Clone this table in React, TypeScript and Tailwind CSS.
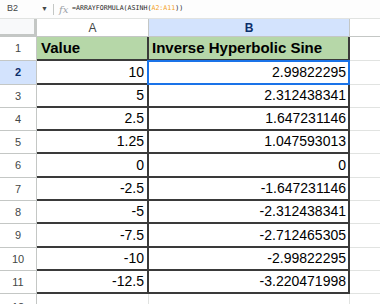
import React from 'react'

const rows = [
    { n: 2, a: '10', b: '2.99822295', h: 'h-[24px]' },
    { n: 3, a: '5', b: '2.312438341', h: 'h-[23px]' },
    { n: 4, a: '2.5', b: '1.647231146', h: 'h-[23px]' },
    { n: 5, a: '1.25', b: '1.047593013', h: 'h-[23px]' },
    { n: 6, a: '0', b: '0', h: 'h-[24px]' },
    { n: 7, a: '-2.5', b: '-1.647231146', h: 'h-[23px]' },
    { n: 8, a: '-5', b: '-2.312438341', h: 'h-[23px]' },
    { n: 9, a: '-7.5', b: '-2.712465305', h: 'h-[24px]' },
    { n: 10, a: '-10', b: '-2.99822295', h: 'h-[23px]' },
    { n: 11, a: '-12.5', b: '-3.220471998', h: 'h-[23px]' },
]

function App() {
    return (
        <div className="w-[380px] h-[304px] overflow-hidden bg-white font-['Liberation_Sans',Arial,sans-serif] text-black select-none">
            {/* formula bar */}
            <div className="h-[19px] flex items-center border-b border-[#e1e3e1] bg-[#fdfdfd] text-[#444746]">
                <span className="w-[41px] pl-[7px] text-[9px]">B2</span>
                <span className="text-[7px] w-[12px]">▼</span>
                <span className="w-px h-[11px] bg-[#c4c7c5] mr-[5px]"></span>
                <span className="italic text-[10px] font-['DejaVu_Serif',serif] text-[#9aa0a6] w-[13px]">fx</span>
                <span className="text-[6.6px] font-['DejaVu_Sans_Mono',monospace] text-[#1f1f1f]">
                    =ARRAYFORMULA(ASINH(<span className="text-[#f4a11d]">A2:A11</span>))
                </span>
            </div>

            {/* column headers */}
            <div className="flex h-[18px]">
                <div className="w-[37px] bg-[#f8f9fa] border-r-[3px] border-b-[3px] border-[#c4c7c5]"></div>
                <div className="w-[112px] flex items-center justify-center border-r border-b border-[#c4c7c5] text-[12px] text-[#444746]">A</div>
                <div className="w-[201px] flex items-center justify-center bg-[#d3e3fd] border-r border-b border-[#c4c7c5] text-[12px] font-bold text-[#0b2e6b]">B</div>
                <div className="flex-1 border-b border-[#c4c7c5]"></div>
            </div>

            {/* row 1 */}
            <div className="flex h-[24px]">
                <div className="w-[37px] flex items-center justify-center border-r border-b border-[#c4c7c5] text-[11px] text-[#444746]">1</div>
                <div className="w-[112px] flex items-center pl-[4px] bg-[#b6d7a8] border-r-2 border-b-2 border-[#3a3a3a] text-[15px] font-bold">Value</div>
                <div className="w-[201px] flex items-center pl-[3px] bg-[#b6d7a8] border-r-2 border-b-2 border-[#3a3a3a] text-[15px] font-bold">Inverse Hyperbolic Sine</div>
                <div className="flex-1 border-b border-[#e1e3e1]"></div>
            </div>

            {rows.map((r) => (
                <div key={r.n} className={`flex ${r.h}`}>
                    <div className={`w-[37px] flex items-center justify-center border-r border-b border-[#c4c7c5] text-[11px] ${r.n === 2 ? 'bg-[#d3e3fd] font-bold text-[#0b2e6b]' : 'text-[#444746]'}`}>{r.n}</div>
                    <div className="w-[112px] flex items-center justify-end pr-[3px] border-r-2 border-b-2 border-[#3a3a3a] text-[14px]">{r.a}</div>
                    <div className="w-[201px] relative flex items-center justify-end pr-[2px] border-r-2 border-b-2 border-[#3a3a3a] text-[14px]">
                        {r.b}
                        {r.n === 2 && <span className="absolute left-[-2px] top-[-1px] right-[-2px] bottom-[-2px] border-2 border-[#1a73e8]"></span>}
                    </div>
                    <div className="flex-1 border-b border-[#e1e3e1]"></div>
                </div>
            ))}

            {/* row 12 */}
            <div className="flex h-[23px]">
                <div className="w-[37px] flex items-start justify-center border-r border-[#c4c7c5] text-[11px] text-[#444746] pt-[5px]">12</div>
                <div className="w-[112px] border-r border-[#e1e3e1]"></div>
                <div className="w-[201px] border-r border-[#e1e3e1]"></div>
                <div className="flex-1"></div>
            </div>
        </div>
    )
}

export default App
